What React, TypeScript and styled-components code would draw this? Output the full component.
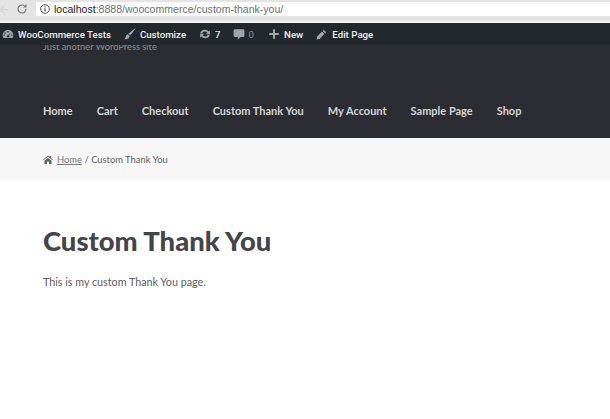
import React from "react";
import styled, { createGlobalStyle } from "styled-components";

const Global = createGlobalStyle`
  html, body { margin: 0; padding: 0; background: #fff; }
  body { width: 610px; height: 419px; overflow: hidden; }
`;

const Page = styled.div`
  width: 610px;
  height: 419px;
  overflow: hidden;
  font-family: Lato, "Noto Sans", sans-serif;
`;

const BrowserBar = styled.div`
  height: 23px;
  box-sizing: border-box;
  padding: 2px 0 5px 0;
  display: flex;
  align-items: stretch;
  background: #e4e4e4;
  border-bottom: 2px solid #f2f2f2;
`;

const NavIcons = styled.div`
  width: 36px;
  flex: none;
  display: flex;
  align-items: center;
  justify-content: space-between;
  padding: 0 8px 0 0;
  box-sizing: border-box;
`;

const AddressField = styled.div`
  flex: 1;
  background: #fff;
  border-radius: 2px 0 0 2px;
  display: flex;
  align-items: center;
  gap: 4px;
  padding-left: 4px;
  font: 10.55px "Liberation Sans", Arial, sans-serif;
  color: #6f6f6f;
`;

const Host = styled.span`
  color: #1c1c1c;
`;

const AdminBar = styled.div`
  height: 22px;
  background: #23282d;
  display: flex;
  align-items: center;
  font: 500 9.7px Roboto, "Liberation Sans", sans-serif;
  color: #eeeeee;
`;

const AdminItem = styled.div<{ $left: number; $gap: number }>`
  display: flex;
  align-items: center;
  gap: ${(p) => p.$gap}px;
  margin-left: ${(p) => p.$left}px;
  white-space: nowrap;
`;

const MutedCount = styled.span`
  color: #8a8e92;
  font-weight: 400;
`;

const Masthead = styled.header`
  height: 93px;
  background: #2c2d33;
  overflow: hidden;
  display: flex;
  flex-direction: column;
`;

const Tagline = styled.div`
  margin: -4px 0 0 43px;
  font-size: 9.3px;
  line-height: 12px;
  color: #8b8d91;
  white-space: nowrap;
`;

const Menu = styled.nav`
  margin: 50px 0 0 43px;
  display: flex;
  gap: 24px;
  font-size: 11px;
  font-weight: 700;
  line-height: 16px;
  color: #d5d5d6;
  white-space: nowrap;
`;

const Breadcrumb = styled.div`
  height: 43px;
  background: #f7f7f7;
  display: flex;
  align-items: center;
  padding-left: 43px;
  font-size: 9.4px;
  color: #5e6167;
  white-space: nowrap;
`;

const CrumbLink = styled.a`
  color: #75777d;
  text-decoration: underline;
  margin: 0 2.5px 0 4px;
`;

const Content = styled.main`
  padding: 42px 0 0 43px;
`;

const Title = styled.h1`
  margin: 0;
  font-size: 27.4px;
  line-height: 36px;
  font-weight: 900;
  color: #43454b;
`;

const Body = styled.p`
  margin: 15px 0 0;
  font-size: 10.75px;
  line-height: 16px;
  color: #5b5d63;
`;

const Back = () => (
  <svg width="8" height="11" viewBox="0 0 8 11" fill="none" stroke="#d2d2d2" strokeWidth="1.2">
    <path d="M8 5.500H1M4.500 1.500 0.800 5.500l3.700 4" />
  </svg>
);

const Reload = () => (
  <svg width="12" height="12" viewBox="0 0 24 24" fill="none" stroke="#7a7a7a" strokeWidth="2.4">
    <path d="M20 12a8 8 0 1 1-2.600-5.900" />
    <path d="M21 2v7h-7z" fill="#7a7a7a" stroke="none" />
  </svg>
);

const Info = () => (
  <svg width="10" height="10" viewBox="0 0 12 12">
    <circle cx="6" cy="6" r="5.200" fill="none" stroke="#444" strokeWidth="1.100" />
    <rect x="5.300" y="5" width="1.400" height="4" fill="#444" />
    <rect x="5.300" y="2.800" width="1.400" height="1.400" fill="#444" />
  </svg>
);

const Dash = () => (
  <svg width="12" height="12" viewBox="0 0 20 20" fill="#a0a5aa">
    <path d="M10 3a9 9 0 0 0-9 9c0 1.800.5 3.400 1.400 4.800h15.200A9 9 0 0 0 19 12a9 9 0 0 0-9-9zm0 2a1.200 1.200 0 1 1 0 2.400A1.200 1.200 0 0 1 10 5zM5 7a1.200 1.200 0 1 1 0 2.400A1.200 1.200 0 0 1 5 7zm9.500.5-2.700 5.200a2 2 0 1 1-1.600-.8zM3.500 11a1.200 1.200 0 1 1 0 2.400 1.200 1.200 0 0 1 0-2.400zm13 0a1.200 1.200 0 1 1 0 2.400 1.200 1.200 0 0 1 0-2.400z" />
  </svg>
);

const Brush = () => (
  <svg width="14" height="14" viewBox="0 0 20 20" fill="#a0a5aa">
    <path d="M18.300 1.500c.4.4-6.300 8.700-8 10.300l-2.300-2.200C9.700 7.900 17.900 1.100 18.300 1.500zM7.200 10.400l2.400 2.400c-.1 3.200-3.600 5.200-7.900 4.600 1.700-1 2-2.200 2.300-3.700.3-1.600 1.400-3 3.200-3.300z" />
  </svg>
);

const Updates = () => (
  <svg width="14" height="14" viewBox="0 0 20 20" fill="#a0a5aa">
    <path d="M10 4c2 0 3.800.9 5 2.400L17 4.500V10.500h-6l2.300-2.300A4.500 4.500 0 0 0 5.800 9H3a7.100 7.100 0 0 1 7-5zM10 16c-2 0-3.800-.9-5-2.400L3 15.500V9.500h6l-2.300 2.300A4.500 4.500 0 0 0 14.200 11H17a7.100 7.100 0 0 1-7 5z" />
  </svg>
);

const Comment = () => (
  <svg width="12" height="12" viewBox="0 0 20 20" fill="#a0a5aa">
    <path d="M3 2h14a2 2 0 0 1 2 2v9a2 2 0 0 1-2 2h-4l-5 4v-4H3a2 2 0 0 1-2-2V4a2 2 0 0 1 2-2z" />
  </svg>
);

const Plus = () => (
  <svg width="12" height="12" viewBox="0 0 20 20" fill="#a0a5aa">
    <path d="M8.300 2h3.400v6.300H18v3.400h-6.300V18H8.300v-6.300H2V8.300h6.300z" />
  </svg>
);

const Pencil = () => (
  <svg width="11" height="11" viewBox="0 0 20 20" fill="#a0a5aa">
    <path d="M14 1.500l4.500 4.500-2 2L12 3.500zM10.800 4.700l4.500 4.500-8.800 8.800L1 19l1-5.500z" />
  </svg>
);

const Home = () => (
  <svg width="10" height="9" viewBox="0 0 20 18" fill="#5e6167">
    <path d="M10 1 0 9.500l1 1.200L10 3.300l9 7.400 1-1.200-3.500-3V2h-3v2.200zM3 11.500V18h5v-5h4v5h5v-6.500L10 5.800z" />
  </svg>
);

export default function App() {
  return (
    <>
      <Global />
      <Page>
        <BrowserBar>
          <NavIcons>
            <Back />
            <Reload />
          </NavIcons>
          <AddressField>
            <Info />
            <span>
              <Host>localhost</Host>:8888/woocommerce/custom-thank-you/
            </span>
          </AddressField>
        </BrowserBar>
        <AdminBar>
          <AdminItem $left={2} $gap={4}>
            <Dash />
            WooCommerce Tests
          </AdminItem>
          <AdminItem $left={12} $gap={3}>
            <Brush />
            Customize
          </AdminItem>
          <AdminItem $left={12} $gap={3}>
            <Updates />
            7
          </AdminItem>
          <AdminItem $left={12} $gap={4}>
            <Comment />
            <MutedCount>0</MutedCount>
          </AdminItem>
          <AdminItem $left={14} $gap={4}>
            <Plus />
            New
          </AdminItem>
          <AdminItem $left={13} $gap={5}>
            <Pencil />
            Edit Page
          </AdminItem>
        </AdminBar>
        <Masthead>
          <Tagline>Just another WordPress site</Tagline>
          <Menu>
            <span>Home</span>
            <span>Cart</span>
            <span>Checkout</span>
            <span>Custom Thank You</span>
            <span>My Account</span>
            <span>Sample Page</span>
            <span>Shop</span>
          </Menu>
        </Masthead>
        <Breadcrumb>
          <Home />
          <CrumbLink>Home</CrumbLink>/ Custom Thank You
        </Breadcrumb>
        <Content>
          <Title>Custom Thank You</Title>
          <Body>This is my custom Thank You page.</Body>
        </Content>
      </Page>
    </>
  );
}
